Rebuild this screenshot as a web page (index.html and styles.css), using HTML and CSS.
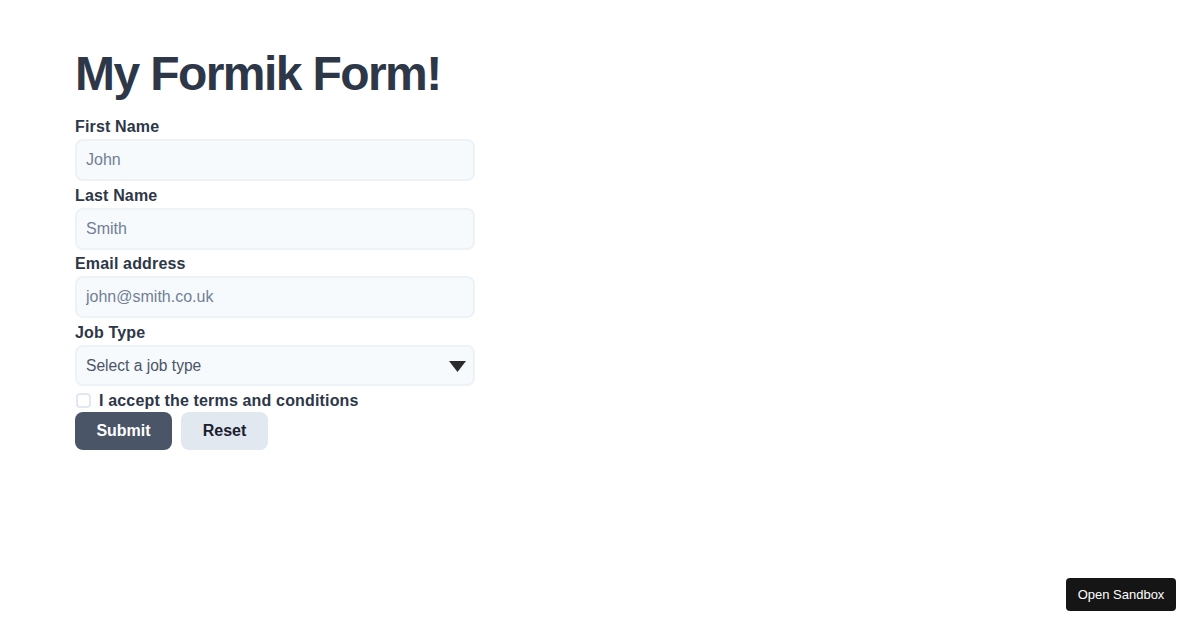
FILE: index.html
```
<!DOCTYPE html>
<html lang="en">
<head>
  <meta charset="UTF-8">
  <meta name="viewport" content="width=device-width, initial-scale=1.0">
  <title>My Formik Form!</title>
  <link rel="stylesheet" href="styles.css">
</head>
<body>
  <div class="page">
    <h1 class="title">My Formik Form!</h1>
    <form class="form">
      <label class="label" for="firstName">First Name</label>
      <input class="field" id="firstName" type="text" placeholder="John">

      <label class="label" for="lastName">Last Name</label>
      <input class="field" id="lastName" type="text" placeholder="Smith">

      <label class="label" for="email">Email address</label>
      <input class="field" id="email" type="email" placeholder="john@smith.co.uk">

      <label class="label" for="jobType">Job Type</label>
      <div class="select-wrap">
        <select class="field select" id="jobType">
          <option value="">Select a job type</option>
          <option value="designer">Designer</option>
          <option value="development">Developer</option>
          <option value="product">Product Manager</option>
          <option value="other">Other</option>
        </select>
        <svg class="caret" width="17" height="11" viewBox="0 0 17 11"><polygon points="0,0 17,0 8.5,11" fill="#2b2b2b"/></svg>
      </div>

      <label class="check">
        <input class="check-box" type="checkbox">
        <span>I accept the terms and conditions</span>
      </label>

      <div class="buttons">
        <button type="submit" class="btn btn-submit">Submit</button>
        <button type="reset" class="btn btn-reset">Reset</button>
      </div>
    </form>
  </div>
  <a class="sandbox" href="#">Open Sandbox</a>
</body>
</html>
```

FILE: styles.css
```
body {
  margin: 0;
  font-family: "Liberation Sans", Arial, sans-serif;
  color: #2d3748;
  background: #fff;
}
.page {
  padding: 50px 0 0 75px;
}
.title {
  margin: 0 0 17px;
  font-size: 48px;
  line-height: 48px;
  font-weight: 700;
  letter-spacing: -0.033em;
  color: #2d3748;
}
.form {
  display: flex;
  flex-direction: column;
  width: 400px;
}
.label {
  font-size: 16px;
  line-height: 24px;
  font-weight: 700;
  letter-spacing: 0.01em;
}
.field {
  box-sizing: border-box;
  width: 400px;
  height: 42px;
  margin: 0 0 2.67px;
  padding: 0 9px;
  font-family: inherit;
  font-size: 16px;
  color: #2d3748;
  background: #f7fafc;
  border: 2px solid #edf2f7;
  border-radius: 8px;
  outline: none;
}
.field::placeholder {
  color: #718096;
}
.select-wrap {
  position: relative;
}
.select {
  appearance: none;
  -webkit-appearance: none;
  height: 41px;
  margin: 0;
  font-size: 15.6px;
  color: #4a5568;
}
.caret {
  position: absolute;
  right: 9px;
  top: 16px;
  pointer-events: none;
}
.check {
  display: flex;
  align-items: center;
  gap: 8px;
  margin-top: 5px;
  height: 20px;
  font-size: 16px;
  font-weight: 700;
  line-height: 20px;
  letter-spacing: 0.01em;
}
.check-box {
  appearance: none;
  -webkit-appearance: none;
  box-sizing: border-box;
  width: 15px;
  height: 15px;
  margin: 0 0 0 1px;
  border: 2px solid #e2e8f0;
  border-radius: 4px;
  background: #fff;
}
.buttons {
  display: flex;
  gap: 9px;
  margin-top: 1px;
}
.btn {
  height: 38px;
  border: none;
  border-radius: 8px;
  font-family: inherit;
  font-size: 16px;
  font-weight: 700;
  cursor: pointer;
}
.btn-submit {
  width: 97px;
  background: #4a5568;
  color: #fff;
}
.btn-reset {
  width: 87px;
  background: #e2e8f0;
  color: #1a202c;
}
.sandbox {
  position: fixed;
  right: 24px;
  bottom: 19px;
  width: 110px;
  height: 33px;
  line-height: 33px;
  text-align: center;
  background: #151515;
  color: #fff;
  font-size: 13px;
  border-radius: 4px;
  text-decoration: none;
  font-family: "Liberation Sans", Arial, sans-serif;
}
```
